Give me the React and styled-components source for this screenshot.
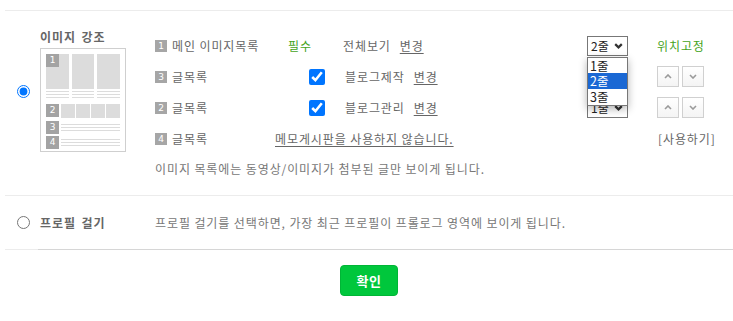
import React from "react";
import styled, { createGlobalStyle } from "styled-components";

const Global = createGlobalStyle`
  html, body { margin: 0; padding: 0; background: #fff; }
  body {
    font-family: "Noto Sans CJK KR", "Noto Sans", sans-serif;
    font-size: 12px;
    color: #666;
    letter-spacing: 0.9px;
  }
`;

const Page = styled.div`
  padding: 10px 0 0 5px;
`;

const Section = styled.div`
  display: flex;
  align-items: ${(p) => (p.$center ? "center" : "flex-start")};
  border-top: 1px solid #ececec;
  padding: ${(p) => p.$pad || 0};
  height: ${(p) => p.$h || "auto"};
  box-sizing: border-box;
`;

const LeftCell = styled.div`
  width: 150px;
  flex: none;
  display: flex;
  align-items: center;
  padding-left: 12px;
  box-sizing: border-box;
  gap: 10px;
`;

const Radio = styled.input.attrs({ type: "radio" })`
  margin: 0;
  width: 13px;
  height: 13px;
  flex: none;
`;

const TitleBlock = styled.div`
  display: flex;
  flex-direction: column;
  gap: 4px;
`;

const Title = styled.div`
  font-weight: bold;
  color: #666;
  line-height: 14px;
  letter-spacing: 0.9px;
  word-spacing: 2px;
`;

/* thumbnail */
const Thumb = styled.div`
  width: 86px;
  height: 104px;
  box-sizing: border-box;
  border: 1px solid #cfcfcf;
  padding: 5px 5px 0 5px;
  display: flex;
  flex-direction: column;
`;

const ThumbTop = styled.div`
  display: grid;
  grid-template-columns: 23px 22px 23px;
  gap: 3px;
`;

const ThumbCol = styled.div`
  display: flex;
  flex-direction: column;
  gap: 2px;
`;

const ThumbImg = styled.div`
  position: relative;
  height: ${(p) => p.$h || 35}px;
  background: #dcdcdc;
`;

const Lines = styled.div`
  display: flex;
  flex-direction: column;
  gap: 2px;
  padding-top: ${(p) => p.$pt || 0}px;
  flex: 1;
`;

const Line = styled.div`
  height: 1px;
  background: #dcdcdc;
`;

const ThumbRow = styled.div`
  display: flex;
  gap: 2px;
  height: 13px;
  margin-top: ${(p) => p.$mt}px;
`;

const ThumbBoxes = styled.div`
  flex: 1;
  display: grid;
  grid-template-columns: repeat(4, 1fr);
  gap: 1px;
  height: 14px;
`;

const ThumbBadge = styled.div`
  width: 13px;
  height: 13px;
  flex: none;
  background: #a3a3a3;
  color: #fff;
  font-family: "DejaVu Sans", sans-serif;
  font-size: 9px;
  letter-spacing: 0;
  line-height: 13px;
  text-align: center;
  ${(p) => (p.$overlay ? "position: absolute; left: 0; top: 0;" : "")}
`;

/* content */
const Content = styled.div`
  flex: 1;
  display: flex;
  flex-direction: column;
`;

const Grid = styled.div`
  display: grid;
  grid-template-columns: 120px 68px 244px 70px 1fr;
  grid-auto-rows: 31px;
  align-items: center;
  line-height: 16px;
`;

const Label = styled.div`
  display: flex;
  align-items: center;
  gap: 5px;
  color: #666;
`;

const Num = styled.span`
  width: 12px;
  height: 12px;
  background: #a6a6a6;
  color: #fff;
  font-family: "DejaVu Sans", sans-serif;
  font-size: 9px;
  letter-spacing: 0;
  line-height: 12px;
  text-align: center;
  flex: none;
`;

const Green = styled.span`
  color: #45a31b;
  padding-left: ${(p) => p.$pl || 0}px;
`;

const Check = styled.input.attrs({ type: "checkbox" })`
  margin: 0 0 0 34px;
  width: 16px;
  height: 16px;
`;

const Name = styled.div`
  display: flex;
  gap: 9px;
  padding-left: ${(p) => p.$pl || 0}px;
  grid-column: ${(p) => p.$span || "auto"};
`;

const Link = styled.span`
  text-decoration: underline;
  text-underline-offset: 2px;
  color: #666;
`;

const SelectWrap = styled.div`
  position: relative;
  width: 41px;
  height: 20px;
  margin-top: 1px;
`;

const SelectBox = styled.div`
  box-sizing: border-box;
  width: 41px;
  height: 20px;
  border: 1px solid #777;
  background: #fff;
  display: flex;
  align-items: center;
  justify-content: space-between;
  padding: 0 4px 0 3px;
  color: #222;
  letter-spacing: 0;
  font-size: 12px;
`;

const Popup = styled.div`
  position: absolute;
  left: 0;
  top: 21px;
  width: 41px;
  box-sizing: border-box;
  border: 1px solid #777;
  background: #fff;
  box-shadow: 0 3px 8px rgba(0, 0, 0, 0.3);
  z-index: 5;
`;

const Option = styled.div`
  height: ${(p) => p.$h || 16}px;
  line-height: ${(p) => p.$h || 16}px;
  padding-left: 2px;
  color: ${(p) => (p.$sel ? "#fff" : "#222")};
  background: ${(p) => (p.$sel ? "#1a68d4" : "transparent")};
  letter-spacing: 0;
  font-size: 12.5px;
`;

const Arrows = styled.div`
  display: flex;
  gap: 3px;
`;

const ArrowBtn = styled.div`
  width: 22px;
  height: 21px;
  box-sizing: border-box;
  border: 1px solid #d0d0d0;
  background: linear-gradient(#fff, #f4f4f4);
  display: flex;
  align-items: center;
  justify-content: center;
`;

const Bracket = styled.span`
  padding-left: 1px;
  color: #666;
`;

const Desc = styled.div`
  color: #777;
  line-height: 18px;
  margin-top: ${(p) => p.$mt || 0}px;
`;

const Divider = styled.div`
  height: 1px;
  background: linear-gradient(to right, #ececec 33px, #d6d6d6 33px);
`;

const Footer = styled.div`
  display: flex;
  justify-content: center;
  padding-top: 15px;
`;

const OkButton = styled.button`
  width: 58px;
  height: 31px;
  border: 1px solid #00b536;
  border-radius: 4px;
  background: #00c73c;
  color: #fff;
  font-family: "Noto Sans CJK KR", sans-serif;
  font-weight: bold;
  font-size: 13px;
  letter-spacing: 0.5px;
  padding: 0;
`;

const Chevron = ({ up, color = "#9a9a9a", w = 8, sw = 1.6 }) => (
  <svg width={w} height={w / 2 + 1} viewBox="0 0 8 5">
    <polyline
      points={up ? "1,4 4,1 7,4" : "1,1 4,4 7,1"}
      fill="none"
      stroke={color}
      strokeWidth={sw}
    />
  </svg>
);

const FakeSelect = ({ value, open }) => (
  <SelectWrap>
    <SelectBox>
      <span>{value}</span>
      <Chevron color="#333" w={9} sw={2} />
    </SelectBox>
    {open && (
      <Popup>
        <Option $h={15}>1줄</Option>
        <Option $sel>2줄</Option>
        <Option>3줄</Option>
      </Popup>
    )}
  </SelectWrap>
);

const UpDown = () => (
  <Arrows>
    <ArrowBtn>
      <Chevron up />
    </ArrowBtn>
    <ArrowBtn>
      <Chevron />
    </ArrowBtn>
  </Arrows>
);

export default function App() {
  return (
    <>
      <Global />
      <Page>
        <Section $pad="19px 0 17px 0">
          <LeftCell>
            <Radio name="layout" defaultChecked />
            <TitleBlock>
              <Title>이미지 강조</Title>
              <Thumb>
                <ThumbTop>
                  {[0, 1, 2].map((i) => (
                    <ThumbCol key={i}>
                      <ThumbImg>
                        {i === 0 && <ThumbBadge $overlay>1</ThumbBadge>}
                      </ThumbImg>
                      <Lines>
                        <Line />
                        <Line />
                        <Line />
                      </Lines>
                    </ThumbCol>
                  ))}
                </ThumbTop>
                <ThumbRow $mt={6}>
                  <ThumbBadge>2</ThumbBadge>
                  <ThumbBoxes>
                    <ThumbImg $h={14} />
                    <ThumbImg $h={14} />
                    <ThumbImg $h={14} />
                    <ThumbImg $h={14} />
                  </ThumbBoxes>
                </ThumbRow>
                <ThumbRow $mt={4}>
                  <ThumbBadge>3</ThumbBadge>
                  <Lines $pt={3}>
                    <Line />
                    <Line />
                    <Line />
                  </Lines>
                </ThumbRow>
                <ThumbRow $mt={2}>
                  <ThumbBadge>4</ThumbBadge>
                  <Lines $pt={3}>
                    <Line />
                    <Line />
                    <Line />
                  </Lines>
                </ThumbRow>
              </Thumb>
            </TitleBlock>
          </LeftCell>
          <Content>
            <Grid>
              <Label>
                <Num>1</Num>메인 이미지목록
              </Label>
              <Green $pl={13}>필수</Green>
              <Name>
                <span>전체보기</span>
                <Link>변경</Link>
              </Name>
              <FakeSelect value="2줄" open />
              <Green>위치고정</Green>

              <Label>
                <Num>3</Num>글목록
              </Label>
              <Check defaultChecked />
              <Name $pl={2}>
                <span>블로그제작</span>
                <Link>변경</Link>
              </Name>
              <div />
              <UpDown />

              <Label>
                <Num>2</Num>글목록
              </Label>
              <Check defaultChecked />
              <Name $pl={2}>
                <span>블로그관리</span>
                <Link>변경</Link>
              </Name>
              <FakeSelect value="1줄" />
              <UpDown />

              <Label>
                <Num>4</Num>글목록
              </Label>
              <Name $span="2 / span 2">
                <Link>메모게시판을 사용하지 않습니다.</Link>
              </Name>
              <div />
              <Bracket>[사용하기]</Bracket>
            </Grid>
            <Desc $mt={6}>
              이미지 목록에는 동영상/이미지가 첨부된 글만 보이게 됩니다.
            </Desc>
          </Content>
        </Section>
        <Section $center $h="54px">
          <LeftCell>
            <Radio name="layout" />
            <Title>프로필 걸기</Title>
          </LeftCell>
          <Desc>
            프로필 걸기를 선택하면, 가장 최근 프로필이 프롤로그 영역에 보이게 됩니다.
          </Desc>
        </Section>
        <Divider />
        <Footer>
          <OkButton>확인</OkButton>
        </Footer>
      </Page>
    </>
  );
}
